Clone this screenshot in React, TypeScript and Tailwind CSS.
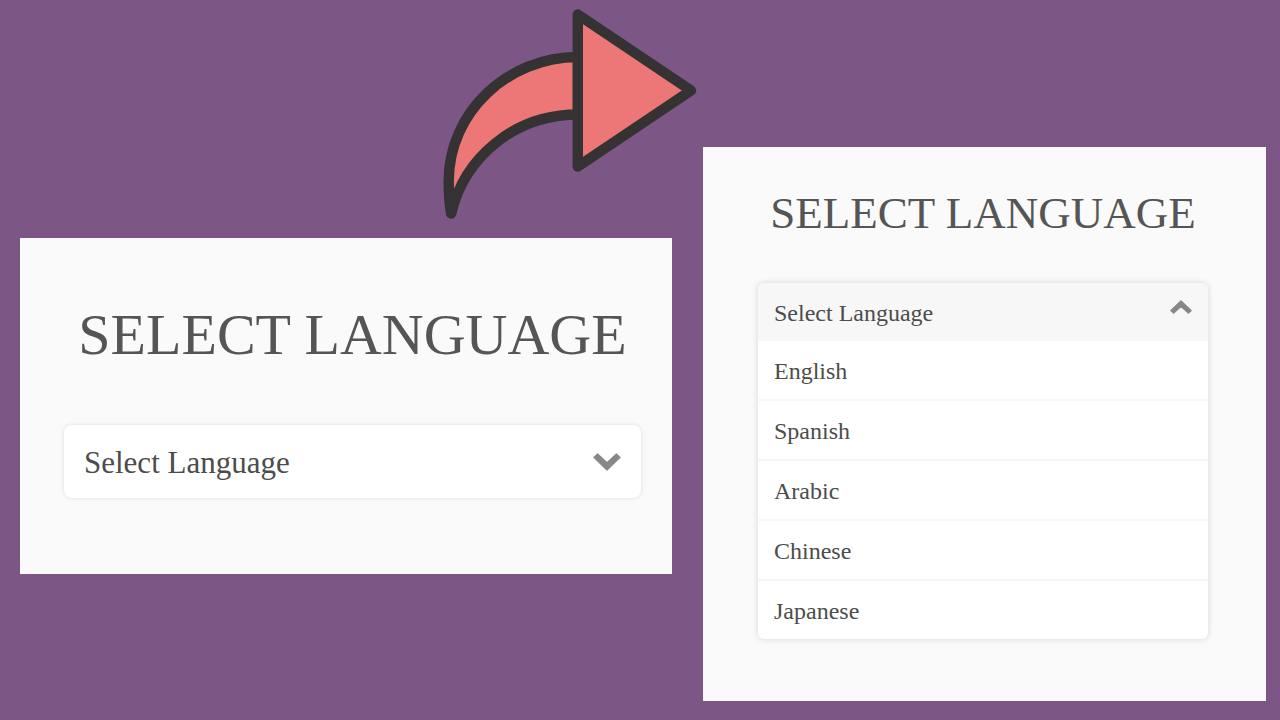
/**
 * Language selector showcase: the closed field on the left,
 * the opened menu on the right, with an arrow between them.
 */

import { useState } from 'react'

const PLACEHOLDER = 'Select Language'

const LANGUAGES = ['English', 'Spanish', 'Arabic', 'Chinese', 'Japanese'] as const

function CurvedArrow() {
  return (
    <svg
      viewBox="438 6 260 218"
      className="w-[260px] h-[218px]"
      fill="#ed7777"
      stroke="#343232"
      strokeWidth="10.4"
      strokeLinecap="round"
      strokeLinejoin="round"
      aria-hidden="true"
    >
      <path d="M451.2 213.5 C449.2 203 448.7 192 448.7 181 C448.7 112 508 57 578 57 L578 114.5 C514 114.5 464 158 451.2 213.5 Z" />
      <path d="M577.8 14.5 L691 90.5 L577.8 166.5 Z" />
    </svg>
  )
}

/** Heavy chevron with slightly softened corners. */
function Chevron({ className }: { className: string }) {
  return (
    <svg viewBox="0 0 28 18" className={className} fill="#888888" stroke="#888888" strokeWidth="2" strokeLinejoin="round" aria-hidden="true">
      <path d="M14 16.6 L1.4 4.4 L4.6 1.4 L14 10.2 L23.4 1.4 L26.6 4.4 Z" />
    </svg>
  )
}

/** Native select in its resting state. */
function ClosedSelect() {
  const [value, setValue] = useState('')

  return (
    <section className="bg-[#fafafa] pt-[65px] pb-[76px] pl-11 pr-[31px]">
      <label
        htmlFor="language"
        className="block text-center text-[58px] leading-[64px] whitespace-nowrap"
      >
        SELECT LANGUAGE
      </label>
      <div className="relative mt-[58px]">
        <select
          id="language"
          value={value}
          onChange={(e) => setValue(e.target.value)}
          className="block w-full h-[73px] appearance-none rounded-lg bg-white pt-1 pl-5 pr-16 text-[31px] text-[#4c4c4c] shadow-[0_0_4px_rgba(0,0,0,0.12)]"
        >
          <option value="">{PLACEHOLDER}</option>
          {LANGUAGES.map((language) => (
            <option key={language}>{language}</option>
          ))}
        </select>
        <Chevron className="pointer-events-none absolute right-5 inset-y-0 my-auto w-7 h-[18px]" />
      </div>
    </section>
  )
}

/** Custom menu, open by default. */
function OpenSelect() {
  const [open, setOpen] = useState(true)
  const [value, setValue] = useState(PLACEHOLDER)

  return (
    <section className="bg-[#fafafa] pt-[41px] pb-[62px] pl-[55px] pr-[58px]">
      <h2 id="menu-title" className="text-center text-[45px] leading-[50px] whitespace-nowrap">
        SELECT LANGUAGE
      </h2>
      <div className="mt-[45px] overflow-hidden rounded-md bg-white text-2xl leading-7 text-[#4c4c4c] shadow-[0_0_6px_rgba(0,0,0,0.15)]">
        <button
          type="button"
          aria-expanded={open}
          aria-controls="language-menu"
          onClick={() => setOpen((o) => !o)}
          className="flex w-full h-[58px] items-start justify-between bg-[#f7f7f7] px-4 pt-4 text-left"
        >
          {value}
          <Chevron className="w-[22px] h-4 rotate-180" />
        </button>
        {open && (
          <ul id="language-menu" aria-labelledby="menu-title" className="divide-y-2 divide-[#f7f7f7]">
            {LANGUAGES.map((language) => (
              <li key={language}>
                <button
                  type="button"
                  onClick={() => setValue(language)}
                  className="block w-full h-[58px] pt-0.5 pl-4 text-left hover:bg-[#f7f7f7]"
                >
                  {language}
                </button>
              </li>
            ))}
          </ul>
        )}
      </div>
    </section>
  )
}

export default function App() {
  return (
    <main className="grid min-h-screen grid-cols-[652fr_563fr] items-start gap-[31px] bg-[#7c5685] pl-5 pr-3.5 font-['Liberation_Serif',serif] text-[#555555]">
      <div className="pt-1.5">
        <div className="mb-3.5 -mr-[26px] flex justify-end">
          <CurvedArrow />
        </div>
        <ClosedSelect />
      </div>
      <div className="pt-[147px]">
        <OpenSelect />
      </div>
    </main>
  )
}
